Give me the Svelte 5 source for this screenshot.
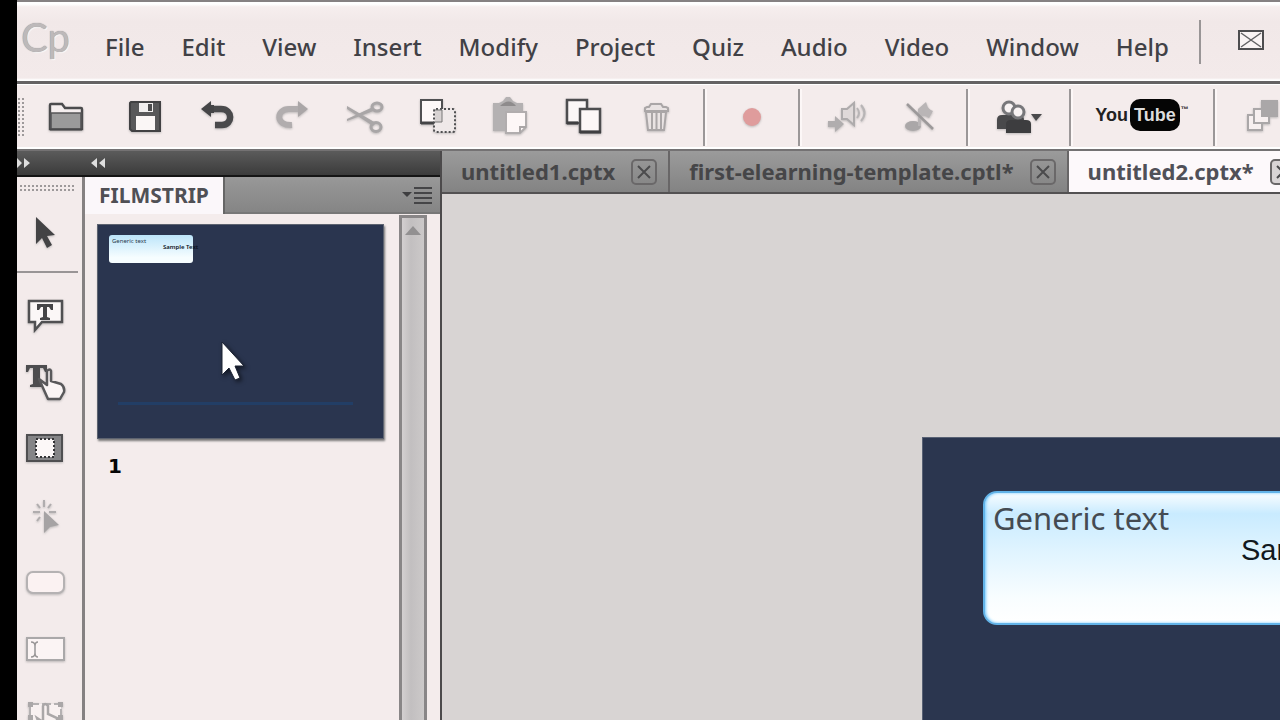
<script>
  const menus = ['File', 'Edit', 'View', 'Insert', 'Modify', 'Project', 'Quiz', 'Audio', 'Video', 'Window', 'Help'];
  const tabs = [
    { name: 'untitled1.cptx', active: false },
    { name: 'first-elearning-template.cptl*', active: false },
    { name: 'untitled2.cptx*', active: true }
  ];
  const fileTools = [
    ['open', 'Open'], ['save', 'Save'], ['undo', 'Undo'], ['redo', 'Redo'], ['cut', 'Cut'],
    ['duplicate', 'Duplicate'], ['paste', 'Paste'], ['copy', 'Copy'], ['trash', 'Delete']
  ];
  const objectTools = [
    ['caption', 'Text caption'], ['rollover', 'Rollover caption'], ['highlight', 'Highlight box'],
    ['click', 'Click box'], ['button', 'Button'], ['entry', 'Text entry box'], ['widget', 'Rollover slidelet']
  ];
</script>

{#snippet icon(name)}
  <svg class="icon" viewBox="0 0 44 44" aria-hidden="true">
    {#if name === 'open'}
      <path d="M5 34V10q0-1 1-1h11l3 4h16q1 0 1 1v20z" fill="#f4eeee" stroke="#4b4b4d" stroke-width="2.4" />
      <path d="M6 18h30v16H6z" fill="#9b9b9b" stroke="#555557" stroke-width="1.6" />
      <path d="M5 34.500h32" stroke="#48484a" stroke-width="2" />
    {:else if name === 'save'}
      <path d="M7 7h29v29H8l-2-2V8z" fill="#58585a" stroke="#414143" stroke-width="2" />
      <path d="M15 8h14v9H15z" fill="#f0eeee" /><path d="M24 9h4v7h-4z" fill="#4c4c4e" />
      <path d="M12 21h19v14H12z" fill="#faf6f6" />
    {:else if name === 'undo'}
      <path d="M14 14h10c12 0 12 16 1 16h-7" fill="none" stroke="#4a4a4c" stroke-width="6.500" />
      <path d="M4 14 14 6v4h3v8h-3v4z" fill="#454547" />
    {:else if name === 'redo'}
      <path d="M29 14H19C6 14 5 31 22 30" fill="none" stroke="#b1adae" stroke-width="6" />
      <path d="M38 14 28 6v16z" fill="#aaa6a7" />
    {:else if name === 'cut'}
      <g fill="none" stroke="#a9a6a7">
        <ellipse cx="34" cy="12" rx="5" ry="4" stroke-width="3" /><ellipse cx="33" cy="32" rx="5" ry="4.500" stroke-width="3" />
      </g>
      <path d="M4 11 33 28l-3 3L4 14zM4 26v-2L30 12l3 3z" fill="#a9a6a7" />
    {:else if name === 'duplicate'}
      <path d="M5 5h21v23H5z" fill="#fdf8f8" stroke="#505052" stroke-width="2" />
      <path d="M5 28h13" stroke="#444446" stroke-width="3" />
      <rect x="18" y="14" width="21" height="23" rx="2" fill="#efe9e9" stroke="#505052" stroke-width="2" stroke-dasharray="2 2" />
      <path d="M19 15h7v12h-7" fill="#d7d2d2" stroke="#777" />
    {:else if name === 'paste'}
      <path d="M4 8h6l4-2 3-4h4l3 4 4 2h6v28H4z" fill="#b4b1b2" />
      <path d="M11 11q9-9 16 0z" fill="#8e8b8c" />
      <path d="M17 17h20v15l-6 6H17z" fill="#fdf7f7" stroke="#b1adae" stroke-width="2" />
      <path d="M31 38v-6h6" fill="none" stroke="#aaa6a7" stroke-width="2" />
    {:else if name === 'copy'}
      <path d="M5 5h20v23H5z" fill="#fbf7f7" stroke="#4d4d4f" stroke-width="2.500" />
      <path d="M18 14h20v23H18z" fill="#fcf7f7" stroke="#4d4d4f" stroke-width="2.500" />
      <path d="M5 28h11M18 37h21" stroke="#3f3f41" stroke-width="3" />
    {:else if name === 'trash'}
      <g fill="#e9e3e3" stroke="#aaa6a7" stroke-width="2">
        <path d="M11 17h20l-2 18H13z" /><path d="M10 16v-3l2-1h2l2-3h10l2 3h3l2 1v3z" />
        <path d="M17 18v16M21.500 18v16M26 18v16" />
      </g>
    {:else if name === 'record'}
      <circle cx="22" cy="22" r="9" fill="#df9c9c" />
    {:else if name === 'sound'}
      <path d="M3 26h7v-5l9 8-9 8v-5H3z" fill="#b0adae" />
      <path d="M17 14h5l7-6v22l-7-6h-5z" fill="#dfd9d9" stroke="#aeabac" stroke-width="2" />
      <path d="M32 13q4 5 0 10M36 10q7 8 0 16" fill="none" stroke="#b8b5b6" stroke-width="2" />
    {:else if name === 'mute'}
      <ellipse cx="15" cy="31" rx="8" ry="5" fill="#aaa7a8" />
      <path d="M20 31V14l8-7 1 3q1 4 6 6l-4 7q-4-3-8-2v10z" fill="#b9b5b6" />
      <path d="m9 9 26 25" stroke="#9c999a" stroke-width="2.500" />
    {:else if name === 'people'}
      <path d="M0 34v-9q0-5 5-5h17q5 0 5 5v9z" fill="#49494b" />
      <circle cx="12" cy="13" r="6" fill="#f8f3f3" stroke="#77777a" stroke-width="3" />
      <path d="M9 38v-9q0-4 5-4h15q5 0 5 4v9z" fill="#3d3d3f" />
      <circle cx="21" cy="17" r="6" fill="#f8f3f3" stroke="#77777a" stroke-width="3" />
      <path d="M34 19h11l-6 7z" fill="#49494b" />
    {:else if name === 'layers'}
      <path d="M8 20h14v15H8z" fill="#f7f0f0" stroke="#aaa7a8" stroke-width="2" />
      <path d="M14 14h15v14H14z" fill="#f7f0f0" stroke="#aaa7a8" stroke-width="2" />
      <path d="M21 5h17v17H21z" fill="#aaa7a8" />
    {:else if name === 'select'}
      <path d="M13 6v27l6-6 5 10 5-3-5-9 8-1z" fill="#434345" />
    {:else if name === 'caption'}
      <path d="M6 8h33v21H19l-7 8v-8H6z" fill="#fbf7f7" stroke="#505052" stroke-width="2.500" />
      <path d="M14 11h16v6h-2l-2-3h-2v10l3 1v2H17v-2l3-1V14h-2l-2 3h-2z" fill="#454547" />
    {:else if name === 'rollover'}
      <path d="M3 5h21v7h-2l-2-4h-3v16l3 1v2H7v-2l3-1V8H7l-2 4H3z" fill="#4d4d4f" />
      <path d="m16 19 8 6V11q3-3 4 0v10l10 3q4 3 3 8l-4 7H25z" fill="#faf5f5" stroke="#59595b" stroke-width="2.500" stroke-linejoin="round" />
    {:else if name === 'highlight'}
      <path d="M4 8h35v26H4z" fill="#858587" stroke="#4f4f51" stroke-width="2" />
      <path d="M13 12h18v18H13z" fill="#fcf8f8" stroke="#343436" stroke-width="2" stroke-dasharray="2 2" />
    {:else if name === 'click'}
      <path d="M21 17v22l6-6 9-2z" fill="#a6a3a4" />
      <path d="M21 6v7M10 18h7M26 18h7M14 10l3 4M28 10l-3 4M17 23l-3 4" stroke="#b0adae" stroke-width="2" />
    {:else if name === 'button'}
      <rect x="4" y="11" width="37" height="21" rx="6" fill="#fbf2f2" stroke="#b5b2b3" stroke-width="2" />
    {:else if name === 'entry'}
      <path d="M4 10h37v22H4z" fill="#fbf4f4" stroke="#aaa8a9" stroke-width="2" />
      <path d="M8 14q4 0 4 4v7q0 4-4 4M15 14q-3 0-3 4v7q0 4 3 4" fill="none" stroke="#989596" stroke-width="1.500" />
    {:else if name === 'widget'}
      <path d="M7 9h31v23H7z" fill="#f8f1f1" stroke="#b4b1b2" stroke-width="2" stroke-dasharray="9 3" />
      <path d="M5 7h5v5H5zM35 7h5v5h-5zM5 20h5v5H5zM35 20h5v5h-5z" fill="#aaa7a8" />
      <path d="m14 23 6 4V11q2-4 5 0v8l9 4v16H20z" fill="#f8f1f1" stroke="#aaa7a8" stroke-width="2.500" />
    {/if}
  </svg>
{/snippet}

{#snippet tool(name, label)}
  <button class="tool {name}" aria-label={label}>{@render icon(name)}</button>
{/snippet}

<div class="app">
  <header class="menubar">
    <span class="logo">Cp</span>
    <nav>
      {#each menus as item}<button>{item}</button>{/each}
    </nav>
    <button class="mail" aria-label="Mail">
      <svg viewBox="0 0 28 22" aria-hidden="true"><path d="M2 2h24v18H2z" fill="#f9f4f4" stroke="#4d4d4f" stroke-width="2" /><path d="m4 4 20 14M24 4 4 18" stroke="#626264" stroke-width="1.500" /></svg>
    </button>
  </header>

  <div class="toolbar">
    <span class="grip vertical"></span>
    <div class="group first">{#each fileTools as [n, l]}{@render tool(n, l)}{/each}</div>
    <div class="group">{@render tool('record', 'Record')}</div>
    <div class="group">{@render tool('sound', 'Record audio')}{@render tool('mute', 'Remove audio')}</div>
    <div class="group">{@render tool('people', 'Collaborate')}</div>
    <div class="group"><button class="youtube">You<b>Tube</b><small>™</small></button></div>
    <div class="group">{@render tool('layers', 'Arrange')}</div>
  </div>

  <main>
    <section class="dock">
      <div class="dockbar">
        <button aria-label="Expand tools"><svg viewBox="0 0 16 12"><path d="M0 1l5 5-5 5zM7 1l6 5-6 5z" fill="#dedede" /></svg></button>
        <button aria-label="Collapse panel"><svg viewBox="0 0 16 12"><path d="M7 1 1 6l6 5zM15 1 9 6l6 5z" fill="#dedede" /></svg></button>
      </div>
      <div class="panels">
        <aside class="tools">
          <span class="grip"></span>
          {@render tool('select', 'Selection')}
          <hr />
          {#each objectTools as [n, l]}{@render tool(n, l)}{/each}
        </aside>
        <div class="filmstrip">
          <div class="paneltabs">
            <h2>FILMSTRIP</h2>
            <button aria-label="Panel menu"><svg viewBox="0 0 30 18"><path d="M0 6h10L5 11z" fill="#3e3e40" /><path d="M12 2h18M12 7h18M12 12h18M12 17h18" stroke="#454547" stroke-width="2" /></svg></button>
          </div>
          <div class="strip">
            <figure>
              <div class="thumb">
                <div class="minicard"><span>Generic text</span><b>Sample Text</b></div>
                <i></i>
                <svg class="cursor" viewBox="0 0 26 42" aria-hidden="true"><path d="M1 1v33l7-7 6 12 5-2-5-12h9z" fill="#fff" stroke="#1b2233" stroke-width="1" /></svg>
              </div>
              <figcaption>1</figcaption>
            </figure>
            <div class="scroll"><button aria-label="Scroll up"><svg viewBox="0 0 16 10"><path d="m8 0 8 9H0z" fill="#929091" /></svg></button></div>
          </div>
        </div>
      </div>
    </section>

    <section class="document">
      <div class="tabs">
        {#each tabs as tab}
          <div class="tab" class:active={tab.active}>
            <button class="name">{tab.name}</button>
            <button class="close" aria-label="Close {tab.name}"><svg viewBox="0 0 22 22"><path d="m5 5 12 12M17 5 5 17" stroke="#4b4b4d" stroke-width="2" /></svg></button>
          </div>
        {/each}
      </div>
      <div class="stage">
        <div class="slide">
          <div class="card"><p class="generic">Generic text</p><p class="sample">Sample Text</p></div>
        </div>
      </div>
    </section>
  </main>
</div>

<style>
  :global(body) { margin: 0; background: #000; overflow: hidden; }
  * { box-sizing: border-box; }
  button { border: 0; padding: 0; margin: 0; background: none; color: inherit; font: inherit; flex-shrink: 0; }
  svg { display: block; }
  .app { height: 100vh; margin-left: 17px; display: flex; flex-direction: column; overflow: hidden; background: #f4ecec; color: #414146; font-family: "Noto Sans", "Open Sans", sans-serif; }
  .menubar { height: 84px; flex-shrink: 0; display: flex; align-items: center; border-top: 2px solid #858182; border-bottom: 3px solid #656364; background: linear-gradient(#fff 0, #fff 2px, #f6eeee 5px, #f1e8e8 20px, #f3eaea 76px, #fff 78px); }
  .logo { width: 88px; padding: 11px 0 0 4px; font: 400 40px/48px Lato, sans-serif; color: #bdb9ba; text-shadow: 0 0 1px #858283, 1px 1px 1px #fff; align-self: flex-start; flex-shrink: 0; }
  nav { display: flex; gap: 37px; font-size: 24px; line-height: 32px; font-weight: 500; padding-top: 10px; }
  .mail { margin-left: 30px; padding-left: 36px; border-left: 2px solid #999596; height: 44px; }
  .mail svg { width: 28px; height: 22px; margin-top: -4px; }
  .toolbar { height: 67px; flex-shrink: 0; display: flex; align-items: center; border-top: 1px solid #fff; border-bottom: 2px solid #747273; box-shadow: inset 0 -2px #fff; }
  .group { height: 57px; padding: 0 10px; display: flex; align-items: center; flex-shrink: 0; border-right: 2px solid #9b9798; }
  .group + .group { box-shadow: inset 2px 0 #fcf7f7; }
  .group.first { padding-left: 0; }
  .group:last-child { border-right: 0; }
  .tool { width: 73px; height: 57px; display: grid; place-items: center; }
  .open { width: 85px; }
  .people { width: 81px; }
  .icon { width: 44px; height: 44px; overflow: visible; filter: drop-shadow(0 1px 1px #8888); }
  .grip { flex-shrink: 0; background: radial-gradient(circle, #9d999a 1px, transparent 1px) 0 0 / 4px 4px; height: 8px; width: 55px; }
  .grip.vertical { width: 7px; height: 41px; }
  .youtube { width: 122px; display: flex; align-items: center; justify-content: center; gap: 2px; padding-bottom: 4px; font: bold 18px/32px "Liberation Sans Narrow", "Liberation Sans", sans-serif; color: #222; }
  .youtube b { background: #050505; color: #ddd; border-radius: 10px; padding: 0 4px; }
  .youtube small { font-size: 8px; line-height: 8px; margin: -10px 0 0 -1px; }
  main { flex: 1; min-height: 0; display: flex; }
  .dock { width: 425px; flex-shrink: 0; display: flex; flex-direction: column; border-right: 2px solid #4c4a4b; }
  .dockbar { height: 26px; flex-shrink: 0; display: flex; align-items: center; gap: 57px; background: linear-gradient(#5b5b5b, #3b3b3b); border-bottom: 2px solid #141414; }
  .dockbar svg { width: 16px; height: 12px; }
  .panels { flex: 1; min-height: 0; display: flex; }
  .tools { width: 68px; flex-shrink: 0; display: flex; flex-direction: column; border-right: 3px solid #858182; overflow: hidden; padding-top: 7px; background: #f3ebeb; }
  .tools .tool { width: 55px; height: 67px; flex-shrink: 0; }
  .tools .grip { margin: 0 2px 7px; }
  hr { width: 61px; margin: 5px 0 8px; border: 0; border-top: 2px solid #999596; flex-shrink: 0; }
  .filmstrip { flex: 1; display: flex; flex-direction: column; min-width: 0; }
  .paneltabs { height: 37px; flex-shrink: 0; display: flex; justify-content: space-between; align-items: center; padding-right: 8px; background: linear-gradient(#989898, #858585); border-bottom: 2px solid #777; }
  h2 { margin: 0 0 -2px; height: 37px; padding: 0 14px; background: #fbf7fa; border-right: 2px solid #666; font-size: 21px; line-height: 36px; font-weight: 700; color: #505055; }
  .paneltabs svg { width: 30px; height: 18px; }
  .strip { flex: 1; min-height: 0; display: flex; justify-content: space-between; padding: 1px 13px 0 12px; background: #f4ecec; }
  figure { margin: 9px 0 0; }
  .thumb { position: relative; width: 287px; height: 215px; background: #2a354f; border: 1px solid #5d6370; box-shadow: 1px 2px 2px #777; }
  .minicard { position: absolute; left: 11px; top: 10px; width: 84px; height: 28px; border-radius: 3px; background: linear-gradient(#bce5fa, #f6fdff 80%); color: #29394a; font-size: 6px; line-height: 6px; padding: 3px; white-space: nowrap; }
  .minicard span, .minicard b { display: block; }
  .minicard b { color: #0b111e; padding-left: 51px; font-weight: 600; }
  .thumb i { position: absolute; left: 20px; right: 30px; bottom: 33px; height: 3px; background: #223e66; }
  .cursor { position: absolute; left: 123px; top: 116px; width: 26px; height: 42px; filter: drop-shadow(2px 2px 2px #0008); }
  figcaption { padding: 13px 11px; color: #050505; font: bold 20px/28px "DejaVu Sans", sans-serif; }
  .scroll { width: 28px; border: 3px solid #898687; border-bottom: 0; background: linear-gradient(90deg, #d3cfd0, #c2bfc0 40%, #ccc9c9); padding-top: 8px; }
  .scroll button { display: block; margin: auto; }
  .scroll svg { width: 16px; height: 10px; }
  .document { flex: 1; min-width: 0; display: flex; flex-direction: column; background: #d8d4d3; overflow: hidden; }
  .tabs { height: 43px; flex-shrink: 0; display: flex; border-bottom: 2px solid #535152; background: #8d8b8c; }
  .tab { flex-shrink: 0; display: flex; align-items: center; gap: 16px; padding: 0 11px 0 19px; background: linear-gradient(#9b9b9b, #838383); border-right: 2px solid #686667; color: #464648; font-size: 22px; line-height: 32px; font-weight: 700; }
  .name { padding-bottom: 2px; }
  .active { background: #fdf9fb; color: #505058; }
  .close { width: 26px; height: 26px; border: 2px solid #6a6869; border-radius: 5px; }
  .close svg { width: 22px; height: 22px; }
  .active .close { background: #d9d5d6; }
  .stage { flex: 1; min-height: 0; padding: 243px 0 0 480px; }
  .slide { height: 100%; min-height: 360px; padding: 53px 0 0 60px; background: #2b364f; border: 1px solid #586174; border-width: 1px 0 0 1px; }
  .card { width: 600px; height: 134px; padding: 7px 8px; border: 2px solid #62b3e8; border-radius: 14px; background: linear-gradient(#f9fdff 0, #c9ebff 16%, #e0f4ff 45%, #f8fdff 80%, #fff); box-shadow: inset 1px 0 3px #75caff; }
  p { margin: 0; white-space: nowrap; }
  .generic { color: #454b52; font-size: 31px; line-height: 36px; }
  .sample { padding-left: 248px; color: #111820; font: 29px/28px "Liberation Sans", sans-serif; }
</style>
